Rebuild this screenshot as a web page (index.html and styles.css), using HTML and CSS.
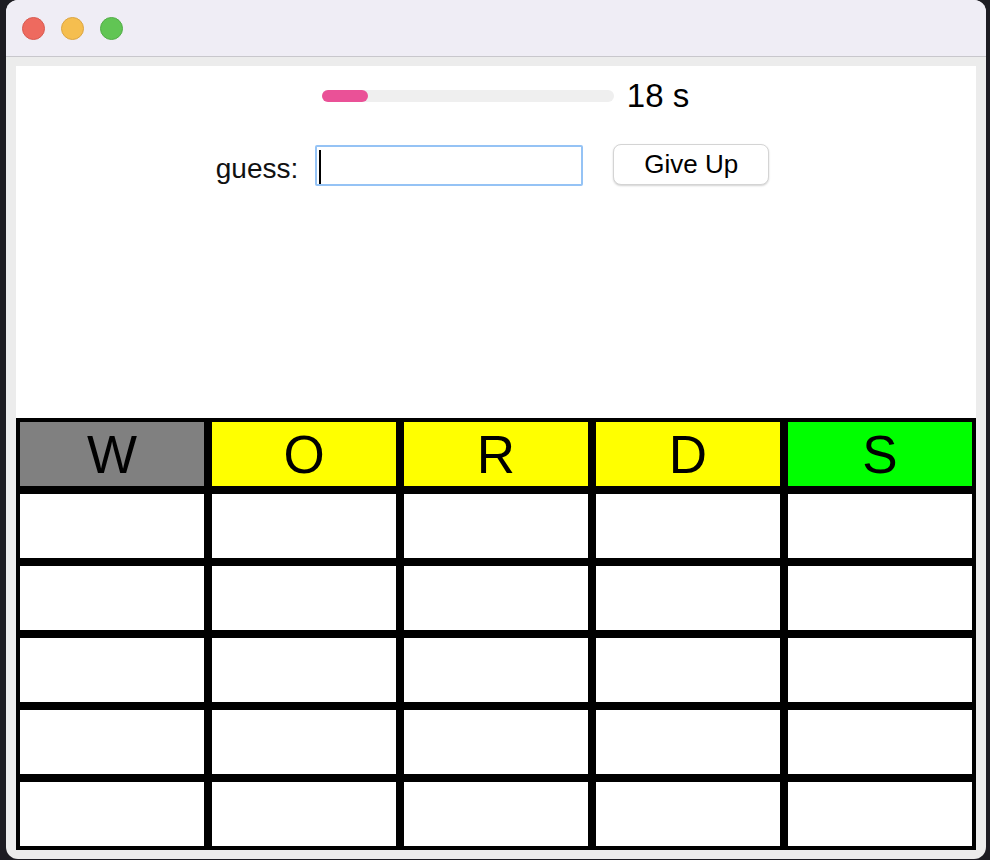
FILE: index.html
```html
<!DOCTYPE html>
<html lang="en">
<head>
    <meta charset="UTF-8">
    <title>Words</title>
    <link rel="stylesheet" href="styles.css">
</head>
<body>
    <div class="window">
        <div class="titlebar">
            <span class="light red"></span>
            <span class="light yellow"></span>
            <span class="light green"></span>
        </div>
        <div class="content">
            <div class="panel">
                <div class="top">
                    <div class="timer-row">
                        <div class="track"><div class="fill" style="width: 46px"></div></div>
                        <span class="seconds">18 s</span>
                    </div>
                    <div class="guess-row">
                        <span class="label">guess:</span>
                        <div class="field"><span class="caret"></span></div>
                        <button class="give-up">Give Up</button>
                    </div>
                </div>
                <div class="board" id="board"></div>
            </div>
        </div>
    </div>
    <script>
        const first = [["W", "gray"], ["O", "yellow"], ["R", "yellow"], ["D", "yellow"], ["S", "green"]];
        const board = document.getElementById("board");
        for (let r = 0; r < 6; r++) {
            for (let c = 0; c < 5; c++) {
                const cell = document.createElement("div");
                cell.className = "cell";
                if (r === 0) {
                    cell.textContent = first[c][0];
                    cell.classList.add(first[c][1]);
                }
                board.appendChild(cell);
            }
        }
    </script>
</body>
</html>
```

FILE: styles.css
```css
body { margin: 0; background: #1d1c22; height: 860px; overflow: hidden; font-family: "Liberation Sans", Arial, sans-serif; }
.window { margin-left: 6px; width: 980px; height: 859px; background: #ececec; border-radius: 12px; overflow: hidden; display: flex; flex-direction: column; }
.titlebar { height: 56px; background: #efedf5; border-bottom: 1px solid #c8c7cc; display: flex; align-items: center; gap: 16px; padding-left: 16px; }
.light { width: 23px; height: 23px; border-radius: 50%; box-sizing: border-box; }
.light.red { background: #ee6a5f; border: 1px solid #d85a50; }
.light.yellow { background: #f5be4f; border: 1px solid #dca542; }
.light.green { background: #61c554; border: 1px solid #52ad47; }
.content { padding: 9px 10px 0; }
.panel { background: #fff; width: 960px; }
.top { height: 352px; padding-top: 12px; box-sizing: border-box; }
.timer-row { display: flex; align-items: center; justify-content: center; gap: 13px; height: 36px; padding-left: 19px; }
.track { width: 292px; height: 12px; background: #efefef; border-radius: 6px; }
.fill { height: 12px; background: #ea5197; border-radius: 6px; }
.seconds { font-size: 33px; color: #000; white-space: nowrap; }
.guess-row { display: flex; align-items: center; justify-content: center; height: 42px; margin-top: 29px; padding-right: 7px; }
.label { font-size: 28px; color: #111; padding-top: 10px; margin-right: 17px; }
.field { width: 268px; height: 41px; box-sizing: border-box; border: 2px solid #95c3f5; border-radius: 2px; padding: 3px 0 0 2px; margin-top: 2px; }
.caret { display: block; width: 2px; height: 34px; background: #000; }
.give-up { margin-left: 30px; width: 156px; height: 41px; background: #fff; border: 1px solid #d4d4d4; border-radius: 8px; box-shadow: 0 1px 2px rgba(0, 0, 0, 0.18); font-family: "Liberation Sans", Arial, sans-serif; font-size: 26px; color: #000; padding: 0; }
.board { display: grid; grid-template-columns: repeat(5, 192px); grid-auto-rows: 72px; }
.cell { border: 4px solid #000; box-sizing: border-box; background: #fff; display: flex; align-items: center; justify-content: center; font-size: 53px; color: #000; }
.cell.gray { background: #808080; }
.cell.yellow { background: #ffff00; }
.cell.green { background: #00ff00; }
```
